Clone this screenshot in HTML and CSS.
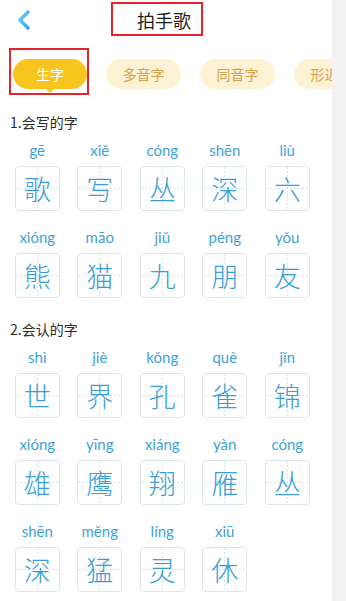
FILE: index.html
```html
<!DOCTYPE html>
<html lang="zh-CN">
<head>
<meta charset="utf-8">
<title>拍手歌</title>
<link rel="stylesheet" href="styles.css">
</head>
<body>
<div class="page">
  <main class="main">
    <header class="header">
      <div class="back">
        <svg width="14" height="20" viewBox="0 0 14 20">
          <defs>
            <linearGradient id="bg" x1="0" y1="0" x2="1" y2="1">
              <stop offset="0" stop-color="#67d4f6"/>
              <stop offset="1" stop-color="#3aa6e6"/>
            </linearGradient>
          </defs>
          <path d="M11 2 L3 10 L11 18" fill="none" stroke="url(#bg)" stroke-width="3.6" stroke-linecap="round" stroke-linejoin="round"/>
        </svg>
      </div>
      <h1 class="title">拍手歌</h1>
      <div></div>
    </header>

    <nav class="tabs">
      <span class="tab active">生字</span>
      <span class="tab">多音字</span>
      <span class="tab">同音字</span>
      <span class="tab">形近字</span>
    </nav>

    <section class="section">
      <h2 class="sec-title">1.会写的字</h2>
      <div class="grid">
        <div class="cell"><span class="py">gē</span><span class="box">歌</span></div>
        <div class="cell"><span class="py">xiě</span><span class="box">写</span></div>
        <div class="cell"><span class="py">cóng</span><span class="box">丛</span></div>
        <div class="cell"><span class="py">shēn</span><span class="box">深</span></div>
        <div class="cell"><span class="py">liù</span><span class="box">六</span></div>
        <div class="cell"><span class="py">xióng</span><span class="box">熊</span></div>
        <div class="cell"><span class="py">māo</span><span class="box">猫</span></div>
        <div class="cell"><span class="py">jiǔ</span><span class="box">九</span></div>
        <div class="cell"><span class="py">péng</span><span class="box">朋</span></div>
        <div class="cell"><span class="py">yǒu</span><span class="box">友</span></div>
      </div>
    </section>

    <section class="section second">
      <h2 class="sec-title">2.会认的字</h2>
      <div class="grid">
        <div class="cell"><span class="py">shì</span><span class="box">世</span></div>
        <div class="cell"><span class="py">jiè</span><span class="box">界</span></div>
        <div class="cell"><span class="py">kǒng</span><span class="box">孔</span></div>
        <div class="cell"><span class="py">què</span><span class="box">雀</span></div>
        <div class="cell"><span class="py">jǐn</span><span class="box">锦</span></div>
        <div class="cell"><span class="py">xióng</span><span class="box">雄</span></div>
        <div class="cell"><span class="py">yīng</span><span class="box">鹰</span></div>
        <div class="cell"><span class="py">xiáng</span><span class="box">翔</span></div>
        <div class="cell"><span class="py">yàn</span><span class="box">雁</span></div>
        <div class="cell"><span class="py">cóng</span><span class="box">丛</span></div>
        <div class="cell"><span class="py">shēn</span><span class="box">深</span></div>
        <div class="cell"><span class="py">měng</span><span class="box">猛</span></div>
        <div class="cell"><span class="py">líng</span><span class="box">灵</span></div>
        <div class="cell"><span class="py">xiū</span><span class="box">休</span></div>
      </div>
    </section>
  </main>
  <aside class="rail"></aside>
</div>
</body>
</html>
```

FILE: styles.css
```css
* { box-sizing: border-box; }

html, body {
  margin: 0;
  padding: 0;
  background: #ffffff;
}

body {
  font-family: "Noto Sans CJK SC", "Noto Sans", sans-serif;
  color: #333;
}

.page {
  display: flex;
  min-height: 100vh;
}

.main {
  width: 332px;
  flex-shrink: 0;
  overflow: hidden;
  background: #fff;
}

.rail {
  flex: 1;
  background: #f2f2f2;
}

.header {
  height: 40px;
  display: grid;
  grid-template-columns: 1fr auto 1fr;
  align-items: center;
}

.back {
  padding-left: 17px;
  display: flex;
  align-items: center;
}

.title {
  position: relative;
  margin: 0 4px 0 0;
  font-size: 18px;
  font-weight: 400;
  line-height: 20px;
  color: #1e1e1e;
}

.title::before {
  content: "";
  position: absolute;
  left: -26px;
  right: -12px;
  top: -8px;
  bottom: -6px;
  border: 2px solid #e3242b;
}

.tabs {
  display: flex;
  gap: 19px;
  padding: 19px 0 0 13px;
}

.tab {
  position: relative;
  flex-shrink: 0;
  width: 75px;
  height: 30px;
  border-radius: 15px;
  background: #fdf3d4;
  color: #d6a14a;
  font-size: 14px;
  line-height: 30px;
  text-align: center;
}

.tab.active {
  width: 74px;
  background: #f8c51f;
  color: #fff;
}

.tab.active::after {
  content: "";
  position: absolute;
  left: 50%;
  bottom: -4px;
  margin-left: -4px;
  border-left: 4px solid transparent;
  border-right: 4px solid transparent;
  border-top: 4px solid #f8c51f;
}

.tab.active::before {
  content: "";
  position: absolute;
  left: -4px;
  right: -2px;
  top: -11px;
  bottom: -6px;
  border: 2px solid #e3242b;
}

.section {
  margin-top: 23px;
}

.section.second {
  margin-top: 21px;
}

.sec-title {
  margin: 0 0 8px 0;
  padding-left: 10px;
  font-size: 14px;
  font-weight: 400;
  line-height: 20px;
  color: #2b2b2b;
}

.grid {
  display: grid;
  grid-template-columns: repeat(5, 62.5px);
  row-gap: 16px;
  padding-left: 6px;
}

.cell {
  display: flex;
  flex-direction: column;
  align-items: center;
}

.py {
  font-family: "Lato", "Noto Sans", sans-serif;
  font-size: 15px;
  line-height: 20px;
  height: 20px;
  color: #3fa2d8;
  margin-bottom: 6px;
}

.box {
  width: 45px;
  height: 45px;
  border: 1px solid #dce7ed;
  border-radius: 4px;
  display: flex;
  align-items: center;
  justify-content: center;
  font-size: 27px;
  font-weight: 300;
  color: #3b9dd6;
  background:
    repeating-linear-gradient(to bottom, #d5e3eb 0 2px, transparent 2px 4px) center / 1px 100% no-repeat,
    repeating-linear-gradient(to right, #d5e3eb 0 2px, transparent 2px 4px) center / 100% 1px no-repeat,
    #fff;
}
```
